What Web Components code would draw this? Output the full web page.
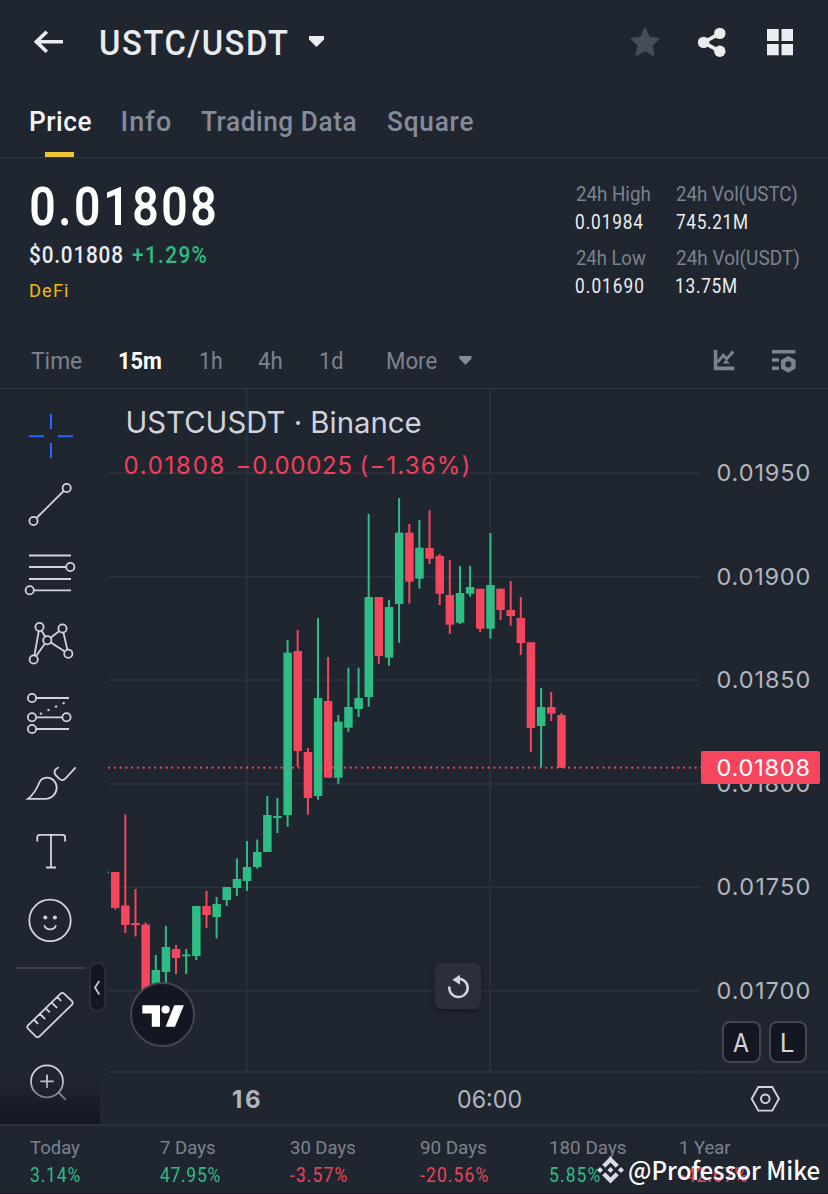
<!DOCTYPE html>
<html lang="en">
<head>
<meta charset="utf-8">
<title>USTC/USDT</title>
<style>
html,body{margin:0;background:#202630}
body{width:828px;height:1194px;overflow:hidden;font-family:Roboto,"Liberation Sans",sans-serif;color:#eaecef}
</style>
</head>
<body>
<market-page></market-page>
<script>
const define = (name, css, html, after) => {
  const t = document.createElement('template');
  t.innerHTML = `<style>*{box-sizing:border-box}svg{display:block}${css}</style>${html}`;
  customElements.define(name, class extends HTMLElement {
    connectedCallback() {
      if (this.shadowRoot) return;
      this.attachShadow({mode: 'open'}).append(document.importNode(t.content, true));
      if (after) after(this, this.shadowRoot);
    }
  });
};

/* One line of text whose ink spans exactly w pixels: s = size, b = weight, h = line height, k = glyph condensing. */
const ctx = document.createElement('canvas').getContext('2d');
define('fit-text',
  `:host{display:block;flex:none;white-space:nowrap}
   span{display:block;width:max-content;transform-origin:0 50%}`,
  `<span><slot></slot></span>`,
  (el, root) => {
    const text = el.textContent, w = +el.getAttribute('w'), s = +el.getAttribute('s');
    el.style.fontSize = s + 'px';
    el.style.fontWeight = el.getAttribute('b') || 400;
    el.style.width = w + 'px';
    el.style.height = el.style.lineHeight = (el.getAttribute('h') || Math.round(s * 1.3)) + 'px';
    if (el.getAttribute('c')) el.style.color = el.getAttribute('c');
    const cs = getComputedStyle(el);
    ctx.font = `${cs.fontWeight} ${s}px ${cs.fontFamily}`;
    const m = ctx.measureText(text), left = m.actualBoundingBoxLeft, ink = m.actualBoundingBoxRight + left;
    const k = Math.min(w / ink, +(el.getAttribute('k') || 1));
    const span = root.querySelector('span');
    if (text.length > 1) span.style.letterSpacing = (w / k - ink) / (text.length - 1) + 'px';
    span.style.transform = `translateX(${left * k}px) scaleX(${k})`;
  });

define('pair-header',
  `:host{display:flex;align-items:center;height:86px;padding:0 34px 0 34px}
   .title{margin:0 21px 0 38px}.sp{flex:1}svg{flex:none}`,
  `<svg width="29" height="86" viewBox="34 0 29 86" fill="none" stroke="#eaecef" stroke-width="3.6"><path d="M63 41.8H37M46.8 31.8L36.3 41.8l10.5 10"/></svg>
   <fit-text class="title" w="187" s="34.4" b="500" k=".95" h="87">USTC/USDT</fit-text>
   <svg width="15" height="86" viewBox="309 0 15 86" fill="#eaecef"><path d="M309 36h15v3.4L316.5 47 309 39.4z"/></svg>
   <span class="sp"></span>
   <svg width="163" height="86" viewBox="631 0 163 86">
     <path d="M645 29l4 8.8 9.4 1-7 6.4 2 9.6-8.4-4.9-8.4 4.9 2-9.6-7-6.4 9.4-1z" fill="#474d57" stroke="#474d57" stroke-width="2" stroke-linejoin="round"/>
     <g fill="#eaecef"><circle cx="719.8" cy="33.4" r="5.7"/><circle cx="703.6" cy="42.4" r="5.7"/><circle cx="719.8" cy="51.3" r="5.7"/>
     <path d="M719.8 33.4L703.6 42.4l16.2 8.9" fill="none" stroke="#eaecef" stroke-width="3.6"/>
     <path d="M767 29h11.7v12H767zM781.5 29H793v12h-11.5zM767 44h11.7v11.3H767zM781.5 44H793v11.3h-11.5z"/></g>
   </svg>`);

define('page-tabs',
  `:host{display:flex;gap:30px;height:72px;padding-left:30px;border-bottom:1px solid #2d3840;color:#848b99}
   .on{color:#f5f5f7;position:relative}
   .on::after{content:"";position:absolute;left:15px;bottom:0;width:29px;height:5px;background:#f0c435}
   div{height:71px}`,
  `<div class="on"><fit-text w="61" s="27" b="500" k=".97" h="72">Price</fit-text></div>
   <fit-text w="48.5" s="27" b="500" h="72" style="margin-left:1.5px">Info</fit-text>
   <fit-text w="155" s="27" b="500" k=".97" h="72">Trading Data</fit-text>
   <fit-text w="86" s="27" b="500" k=".97" h="72" style="margin-left:1px">Square</fit-text>`);

define('stat-cell',
  `:host{display:flex;flex-direction:column;color:#7c828f}::slotted(.v){color:#eceef2}`,
  `<slot></slot>`);

define('price-summary',
  `:host{display:flex;justify-content:space-between;height:175px;padding:0 29px 0 30px}
   .l{padding-top:13px}.row{display:flex;gap:10px}
   .big{margin-left:1px;color:#fff}
   .stats{display:grid;grid-template-columns:75px 123.5px;column-gap:25px;align-content:start;row-gap:9px;padding-top:23px}`,
  `<div class="l"><fit-text class="big" w="184" s="54.5" b="600" k=".85" h="70">0.01808</fit-text>
     <div class="row"><fit-text w="92" s="23" b="500" k=".9" h="29">$0.01808</fit-text><fit-text w="74" s="23" b="500" k=".9" h="29" c="#2ebd85">+1.29%</fit-text></div>
     <fit-text w="38" s="18.8" k=".97" h="42" c="#f0b90b">DeFi</fit-text></div>
   <div class="stats">
     <stat-cell><fit-text w="74" s="19.6" h="28">24h High</fit-text><fit-text class="v" w="67" s="19.6" k=".88" h="27">0.01984</fit-text></stat-cell>
     <stat-cell><fit-text w="121" s="19.6" h="28">24h Vol(USTC)</fit-text><fit-text class="v" w="71" s="19.6" k=".88" h="27">745.21M</fit-text></stat-cell>
     <stat-cell><fit-text w="70" s="19.6" h="28">24h Low</fit-text><fit-text class="v" w="67" s="19.6" k=".88" h="27">0.01690</fit-text></stat-cell>
     <stat-cell><fit-text w="123" s="19.6" h="28">24h Vol(USDT)</fit-text><fit-text class="v" w="60" s="19.6" k=".88" h="27">13.75M</fit-text></stat-cell>
   </div>`);

define('interval-bar',
  `:host{display:flex;height:56px;padding-left:31px;border-bottom:1px solid #2d3840;color:#7c828f}
   .a{margin-right:37px}.sp{flex:1}`,
  `<fit-text class="a" w="51" s="23" h="58">Time</fit-text>
   <fit-text w="42" s="23" b="700" h="58" c="#fff" style="margin-right:39px">15m</fit-text>
   <fit-text w="22" s="23" h="58" style="margin-right:36px">1h</fit-text>
   <fit-text w="24" s="23" h="58" style="margin-right:38px">4h</fit-text>
   <fit-text w="22.5" s="23" h="58" style="margin-right:44.5px">1d</fit-text>
   <fit-text w="50" s="23" h="58" style="margin-right:22px">More</fit-text>
   <svg width="13" height="55" viewBox="459 333 13 55" fill="#848b99"><path d="M459.3 356h12.2v2.5l-6 6.5-6.2-6.5z"/></svg>
   <span class="sp"></span>
   <svg width="115" height="55" viewBox="713 333 115 55" fill="#7c828f">
     <path d="M713.8 350h3.6v16.5h17v3.7h-20.6zM722.4 363.6h7.4l-3.7-4z"/>
     <path d="M717.5 362.3l5.8-7 3.4 3.6 6.6-7.4" fill="none" stroke="#7c828f" stroke-width="3"/>
     <path d="M772 350h23.4v3.6H772zM772 358.2h7v3.5h-7zM772 366.6h7v3.5h-7z"/>
     <path fill-rule="evenodd" d="M788.3 356l7.3 4.1v8.4l-7.3 4.2-7.3-4.2v-8.4zM788.3 361.2a3.1 3.1 0 1 0 0 6.2a3.1 3.1 0 1 0 0-6.2z"/>
   </svg>`);

/* Each drawing tool fills a 100 x 69 slot. */
define('tool-icon', `:host{display:block;height:69px}`, ``, (el, root) => {
  const box = `0 ${el.getAttribute('y')} 100 69`;
  const dot = (x, y) => `<circle cx="${x}" cy="${y}" r="4.1" fill="#202630"/>`;
  const art = {
    cross: `<path stroke="#2962ff" stroke-width="2" d="M51 414v15M51 443v15M29 436.2h15M58 436.2h15"/>`,
    line: `<path d="M66.7 488L33.5 521"/>${dot(66.7,488)}${dot(33.5,521)}`,
    fib: `<path d="M29 555.5h42M29 567h38M29 579h42M34 590.3h37"/>${dot(70.3,567)}${dot(29.7,590.3)}`,
    pattern: `<path d="M33.7 659.5L39.5 627l7.8 13.3L62.5 628.5l5.8 25.2-21-13.4z"/>${dot(39.5,627)}${dot(62.5,628.5)}${dot(47.3,640.3)}${dot(68.3,653.7)}${dot(33.7,659.5)}`,
    project: `<path d="M32 698h37M32 717.3h34M32 729h37"/><path stroke-dasharray="2.2 6.1" stroke-width="2" d="M40 714l27-12.5"/>${dot(32,698)}${dot(32,717.3)}${dot(66.5,717.3)}${dot(32,729)}`,
    brush: `<path d="M28 798.8C33 795 36.5 789 38.5 784.5C40 780 43.5 777.7 47 777.7C52.5 777.7 56.7 782 56.7 787.5C56.7 793.5 52 798.8 45.5 798.8ZM58.7 767.3C54 769.5 53.5 773 56 775.5L59.4 778.9C61.3 780.6 63.5 780.6 65.5 778.3L75.7 767.3"/>`,
    text: `<path d="M37.3 841.5v-4.2q0-2.5 2.5-2.5h22.8q2.5 0 2.5 2.5v4.2M51 834.8v32.7M46 867.5h10"/>`,
    smile: `<circle cx="50" cy="920.4" r="20.7"/><path d="M44.3 925.3C46 930.8 54.3 930.8 56 925.3"/><g fill="#d1d4dc" stroke="none"><circle cx="45.3" cy="917.6" r="2"/><circle cx="54.9" cy="917.6" r="2"/></g>`,
    ruler: `<path stroke-linejoin="round" d="M60.6 993.6q1.7-1.5 3.4 0l8 7.6q1.5 1.7 0 3.4l-32.8 32q-1.6 1.4-3.2 0l-8-8q-1.5-1.7 0-3.2zM57.5 997l3.6 4M51.7 1002.6l5.4 5.2M45.8 1008.4l4 4M40 1014l5.2 5.2M34.3 1020l3.8 3.8"/>`,
    zoom: `<circle cx="47" cy="1081.4" r="16"/><path d="M40.3 1081.4h13.4M47 1074.7v13.4M58.2 1092.2l7.6 7.6"/>`
  };
  root.innerHTML += `<svg width="100" height="69" viewBox="${box}" fill="none" stroke="#d1d4dc" stroke-width="1.8">${art[el.getAttribute('kind')]}</svg>`;
});

define('draw-toolbar',
  `:host{display:flex;flex-direction:column;width:108px;height:735px;padding-top:13px;position:relative}
   hr{border:0;margin:12.5px 0 12.5px 15.5px;width:69px;height:2px;background:#3b404b}
   .fade{position:absolute;left:0;bottom:0;width:100px;height:48px;background:linear-gradient(#13172200,#131722)}
   .handle{position:absolute;left:89px;top:573px;width:16.5px;height:50px;border:2px solid #2a2e39;border-radius:8px;background:#131722;z-index:1}`,
  `<tool-icon kind="cross" y="402"></tool-icon><tool-icon kind="line" y="471"></tool-icon>
   <tool-icon kind="fib" y="540"></tool-icon><tool-icon kind="pattern" y="609"></tool-icon>
   <tool-icon kind="project" y="678"></tool-icon><tool-icon kind="brush" y="747"></tool-icon>
   <tool-icon kind="text" y="816"></tool-icon><tool-icon kind="smile" y="885"></tool-icon>
   <hr>
   <tool-icon kind="ruler" y="981"></tool-icon><tool-icon kind="zoom" y="1050"></tool-icon>
   <div class="fade"></div>
   <div class="handle"><svg width="13" height="46" viewBox="0 0 13 46" fill="none" stroke="#c5c8d0" stroke-width="1.8"><path d="M8.3 17L4 23.6l4.3 6.8"/></svg></div>`);

/* direction, high, body top, body bottom, low */
const candles = [
['r',872,872,908,909.5],['r',814.5,905.5,925,933],['r',889,923,925,936.5],['r',922.5,924.5,993,993],['g',955,970,992,992],
['g',926,947,972,984],['r',945,949,958,974],['g',949,954.5,956.3,974],['g',906,906,956,960],['r',891,906,915,928],
['g',897,904,917,938.5],['g',887,887,900,906],['g',858.5,879,888,896],['g',841,867,881,891],['g',839.5,852,867,868.7],
['g',796,815,852,852],['g',798,816,818,833],['g',640,652.7,815,826.7],['r',630,651,751,767],['r',748,752,798,814.7],
['g',618,698,796,799.7],['r',657,701,777.7,777.7],['g',715,721.7,777.7,783.7],['g',667.7,707,727.7,731.7],['g',667.7,698,709,717],
['g',514,597,697,706.7],['r',597,597,656,663.7],['g',599.7,607,657.7,665.7],['g',498,532.7,604,642.7],['r',524,532.7,581.7,603.5],
['g',520,547.7,578.7,588.7],['r',510.3,548,558.7,564],['r',554,556,593.7,605],['r',560,595,624.7,634],['g',566,593,622.7,624],
['g',566,587,593.7,596.7],['r',588.7,588.7,628.7,632],['g',533,585,628.7,638.7],['r',588.7,588.7,610,620],['r',581,610,616,625.7],
['r',597,618,643,655],['r',642.3,642.3,728,752],['g',688,707,726,767],['r',692,707,713.7,721],['r',713,715,767.7,767.7]];

define('candle-plot',
  `:host{display:block;position:relative;width:593px;height:682px;font-family:Inter,sans-serif}
   .legend{position:absolute;left:16.5px;top:13px}
   .row{display:flex;color:#f23f5b;margin-top:6px}
   .refresh{position:absolute;left:327px;top:574px;width:46px;height:46px;border-radius:7px;background:#2a2f39;box-shadow:0 3px 6px #0005}
   .tv{position:absolute;left:22px;top:593px;width:65px;height:65px;border-radius:50%;border:2px solid #434651;background:#131722}`,
  `<svg id="p" width="593" height="682" viewBox="108 389 593 682"></svg>
   <div class="legend"><fit-text w="293" s="29.3" h="41" c="#d1d4dc" style="margin-left:3px">USTCUSDT · Binance</fit-text>
     <div class="row"><fit-text w="99" s="24" h="34" style="margin-right:14px">0.01808</fit-text><fit-text w="114" s="24" h="34" style="margin-right:10px">−0.00025</fit-text><fit-text w="107" s="24" h="34">(−1.36%)</fit-text></div></div>
   <div class="tv"><svg width="61" height="61" viewBox="132 983.7 61 61" fill="#fff"><path d="M142.3 1005H160v21.5h-8.2v-13.3h-9.5zM174.3 1005h9.6l-9 21.5h-9.3z"/><circle cx="165.6" cy="1009.2" r="4.1"/></svg></div>
   <div class="refresh"><svg width="46" height="46" viewBox="435 963 46 46"><path d="M449.4 986.5a9.2 9.2 0 1 0 9.2-7.8" fill="none" stroke="#d1d4dc" stroke-width="2.5"/><path d="M452.4 979.7l7.6-5v10z" fill="#d1d4dc"/></svg></div>`,
  (el, root) => {
    let s = '<g fill="#2c323c">';
    for (const y of [473.2,576.7,680.1,783.9,887.3,990.7]) s += `<rect x="108" y="${y-.8}" width="593" height="1.6"/>`;
    for (const x of [246.7,490]) s += `<rect x="${x-.8}" y="389" width="1.6" height="682"/>`;
    s += '</g><rect x="108" y="871.5" width="1" height="2" fill="#2ebd85"/>';
    const dots = `<path d="M108.2 767.6H701" stroke="#f6465d" stroke-width="1.8" stroke-dasharray="1.8 3.95"/>`;
    s += dots;
    candles.forEach(([d,h,t,b,l], i) => {
      const x = 115.2 + 10.14 * i, c = d === 'g' ? '#2ebd85' : '#f6465d';
      s += `<g fill="${c}"><rect x="${(x-1).toFixed(1)}" y="${h}" width="2" height="${l-h}"/><rect x="${(x-4.2).toFixed(1)}" y="${t}" width="8.5" height="${b-t}"/></g>`;
    });
    root.getElementById('p').innerHTML = s + `<g opacity=".55">${dots}</g>`;
  });

define('price-axis',
  `:host{display:block;position:relative;width:127px;height:682px;font-family:Inter,sans-serif;color:#b2b5be}
   .labels{display:flex;flex-direction:column;gap:63.6px;padding:64px 0 0 16.5px}
   .tag{position:absolute;left:0;top:362px;width:119px;height:33px;padding-left:16.5px;background:#f6465d;border-radius:2px;color:#fff}
   .keys{position:absolute;left:21px;top:632px;display:flex;gap:8px}
   .keys div{width:38.5px;height:42px;border:2px solid #434651;border-radius:8px;background:#131722;display:flex;justify-content:center}`,
  `<div class="labels"><fit-text w="92" s="23.5" h="40">0.01950</fit-text><fit-text w="92" s="23.5" h="40">0.01900</fit-text><fit-text w="92" s="23.5" h="40">0.01850</fit-text><fit-text w="92" s="23.5" h="40">0.01800</fit-text><fit-text w="92" s="23.5" h="40">0.01750</fit-text><fit-text w="92" s="23.5" h="40">0.01700</fit-text></div>
   <div class="tag"><fit-text w="92" s="23.5" h="33">0.01808</fit-text></div>
   <div class="keys"><div><fit-text w="16" s="26" h="39" c="#d1d4dc">A</fit-text></div><div><fit-text w="12" s="26" h="39" c="#d1d4dc">L</fit-text></div></div>`);

define('time-axis',
  `:host{display:flex;height:53px;width:720px;font-family:Inter,sans-serif;color:#b2b5be}
   .t{width:593px;margin-right:2px;border-top:2px solid #2b313b;display:flex;padding-left:125px}
   .g{width:125px;border-top:2px solid #2b313b}`,
  `<div class="t"><fit-text w="27" s="24" b="700" h="53" style="margin-right:198px">16</fit-text><fit-text w="63" s="24" h="53">06:00</fit-text></div>
   <div class="g"><svg width="125" height="51" viewBox="703 1073 125 51" fill="none" stroke="#d1d4dc" stroke-width="1.9"><path d="M758.3 1087h14l6.6 11.8-6.6 11.8h-14l-6.6-11.8z"/><circle cx="765.3" cy="1098.8" r="4.3"/></svg></div>`);

define('chart-panel',
  `:host{display:grid;grid-template-columns:108px 593px 127px;grid-template-rows:682px 53px;height:735px}
   draw-toolbar{grid-row:1/3}time-axis{grid-column:2/4}`,
  `<draw-toolbar></draw-toolbar><candle-plot></candle-plot><price-axis></price-axis><time-axis></time-axis>`);

define('period-cell', `:host{display:flex;flex-direction:column;color:#7c828f}`, `<slot></slot>`);

define('period-footer',
  `:host{display:block;position:relative;height:70px;border-top:2px solid #2b313b;border-bottom:1px solid #1b1428}
   .grid{display:grid;grid-template-columns:repeat(5,130.1px) 1fr;padding:9px 0 0 29.5px}
   .mark{position:absolute;left:597px;top:30px;display:flex;gap:5px;font-family:"Noto Sans CJK SC",sans-serif;color:#fff;align-items:center}`,
  `<div class="grid">
   <period-cell><fit-text w="50" s="18.8" h="27">Today</fit-text><fit-text w="50" s="19.4" k=".9" h="27" c="#2ebd85">3.14%</fit-text></period-cell>
   <period-cell><fit-text w="55" s="18.8" h="27">7 Days</fit-text><fit-text w="60" s="19.4" k=".9" h="27" c="#2ebd85">47.95%</fit-text></period-cell>
   <period-cell><fit-text w="65" s="18.8" h="27">30 Days</fit-text><fit-text w="57" s="19.4" k=".9" h="27" c="#e8455b">-3.57%</fit-text></period-cell>
   <period-cell><fit-text w="66" s="18.8" h="27">90 Days</fit-text><fit-text w="68" s="19.4" k=".9" h="27" c="#e8455b">-20.56%</fit-text></period-cell>
   <period-cell><fit-text w="76" s="18.8" h="27">180 Days</fit-text><fit-text w="50" s="19.4" k=".9" h="27" c="#2ebd85">5.85%</fit-text></period-cell>
   <period-cell><fit-text w="51" s="18.8" h="27">1 Year</fit-text><fit-text w="67" s="19.4" k=".9" h="27" c="#e8455b">-42.67%</fit-text></period-cell>
   </div>
   <div class="mark"><svg width="27" height="28" viewBox="0 0 24 24" fill="#d9dce4"><path d="M16.624 13.9202l2.7175 2.7154-7.353 7.353-7.353-7.352 2.7175-2.7164 4.6355 4.6595 4.6356-4.6595zm4.6366-4.6366L24 12l-2.7154 2.7164L18.5682 12l2.6924-2.7164zm-9.272.001l2.7163 2.6914-2.7164 2.7174v-.001L9.2721 12l2.7164-2.7154zm-9.2722-.001L5.4088 12l-2.6914 2.6924L0 12l2.7164-2.7164zM11.9885.0115l7.353 7.329-2.7174 2.7154-4.6356-4.6356-4.6355 4.6595-2.7174-2.7154 7.353-7.353z"/></svg>
   <fit-text w="191" s="25" b="500" h="28" style="margin-top:-3px">@Professor Mike</fit-text></div>`);

define('market-page', `:host{display:block;width:828px;height:1194px;background:#202630;overflow:hidden}`,
  `<pair-header></pair-header><page-tabs></page-tabs><price-summary></price-summary><interval-bar></interval-bar><chart-panel></chart-panel><period-footer></period-footer>`);
</script>
</body>
</html>
